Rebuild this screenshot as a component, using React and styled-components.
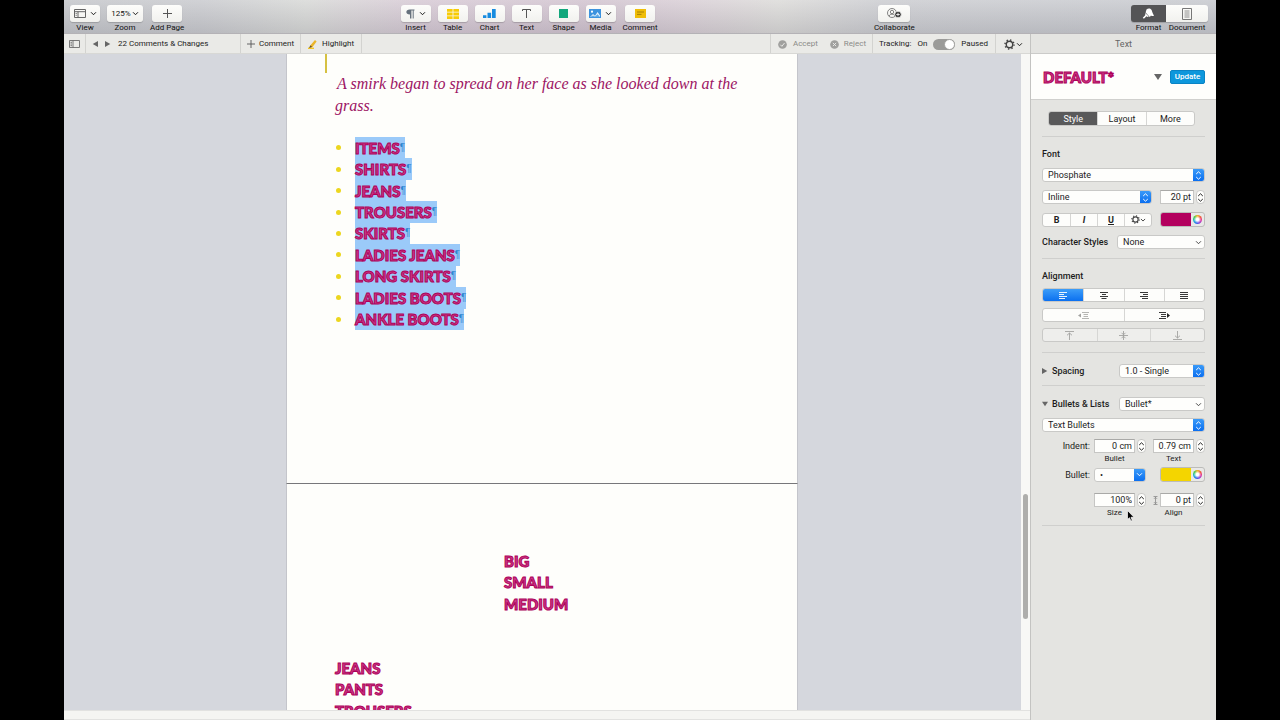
import React from "react";
import styled, { createGlobalStyle, css } from "styled-components";

const Global = createGlobalStyle`
  *, *::before, *::after { box-sizing: border-box; }
  body { margin: 0; background: #000; color: #1c1c1c; font: 8px/10px Roboto, "Liberation Sans", sans-serif; }
  button, select, input { font: inherit; color: inherit; margin: 0; padding: 0; border: 0; background: none; border-radius: 0; }
  p, ul, h1, h2 { margin: 0; padding: 0; list-style: none; }
  svg { display: block; flex: none; }
`;

const Screen = styled.div`
  height: 100vh;
  padding: 0 5%;
  overflow: hidden;
`;
const Window = styled.div`
  height: 100%;
  display: flex;
  flex-direction: column;
`;

/* Toolbar */
const Toolbar = styled.header`
  flex: none;
  height: 34px;
  padding: 5px 8px 0 6px;
  display: flex;
  justify-content: space-between;
  align-items: flex-start;
  border-bottom: 1px solid #b4b2b6;
  background:
    linear-gradient(180deg, rgba(255, 255, 255, 0.12), rgba(90, 90, 100, 0.16)),
    linear-gradient(90deg, #c6c8cc 0%, #cbccd0 12%, #d9dad8 21%, #d8cbd6 31%, #d3c5d1 46%, #dad0d7 54%, #dddcda 62%, #cdced2 71%, #c9cbd0 100%);
`;
const ToolGroup = styled.div`
  display: flex;
  gap: ${(p) => (p.$joined ? "0" : "7px")};
`;
const Tool = styled.label`
  display: flex;
  flex-direction: column;
  align-items: center;
  gap: 1px;
  white-space: nowrap;
  color: #111;
`;
const ToolButton = styled.button`
  min-width: ${(p) => p.$w || 30}px;
  height: 17px;
  display: flex;
  align-items: center;
  justify-content: center;
  gap: 4px;
  border-radius: ${(p) => p.$radius || "3px"};
  background: ${(p) => (p.$active ? "#545456" : "linear-gradient(#fdfdfb, #f1f1ee)")};
  box-shadow: 0 1px 1px rgba(0, 0, 0, 0.18);
`;
const ZoomValue = styled.span`
  margin-right: -3px;
`;

/* Body columns */
const Body = styled.div`
  flex: 1;
  min-height: 0;
  display: flex;
`;
const MainColumn = styled.div`
  flex: 1;
  min-width: 0;
  display: flex;
  flex-direction: column;
`;

/* Review bar */
const ReviewBar = styled.div`
  flex: none;
  height: 20px;
  display: flex;
  align-items: stretch;
  background: #eaeae7;
  border-bottom: 1px solid #d8d8d5;
  white-space: nowrap;
`;
const Cell = styled.div`
  display: flex;
  align-items: center;
  gap: ${(p) => p.$gap || 6}px;
  padding: 1px ${(p) => p.$pr || 6}px 0 ${(p) => p.$pl || 6}px;
  border-right: ${(p) => (p.$last ? "0" : "1px solid #d3d3d0")};
  border-left: ${(p) => (p.$lead ? "1px solid #d3d3d0" : "0")};
`;
const Spacer = styled.div`
  flex: 1;
`;
const PlainButton = styled.button`
  display: flex;
  align-items: center;
  gap: ${(p) => p.$gap || 5}px;
  color: ${(p) => (p.$muted ? "#8a8a88" : "inherit")};
`;
const Status = styled.span`
  min-width: 116px;
`;
const Switch = styled.input`
  appearance: none;
  width: 22px;
  height: 11px;
  border-radius: 6px;
  background: #9b9b99;
  display: flex;
  justify-content: flex-end;
  &::after {
    content: "";
    width: 11px;
    height: 11px;
    border-radius: 50%;
    background: #fff;
    border: 1px solid #a2a2a0;
  }
`;

/* Document canvas */
const CanvasRow = styled.div`
  flex: 1;
  min-height: 0;
  display: flex;
`;
const Canvas = styled.main`
  flex: 1;
  min-width: 0;
  padding-right: 1px;
  overflow: hidden;
  background: #d5d7dd;
  display: flex;
  flex-direction: column;
  align-items: center;
`;
const Page = styled.section`
  width: 512px;
  flex: none;
  background: #fefefb;
  border: solid #c4c5cb;
  border-width: 0 1px;
  padding: 0 48px;
`;
const FirstPage = styled(Page)`
  height: 430px;
  border-bottom: 1px solid #77777a;
`;
const SecondPage = styled(Page)`
  padding-top: 67px;
  flex: 1 0 auto;
`;
const Caret = styled.div`
  width: 2px;
  height: 19px;
  margin-left: -10px;
  background: #d6c142;
`;
const Script = styled.p`
  height: 64px;
  color: #9c1463;
  font: italic 16px/22px "Liberation Serif", serif;
  text-indent: 2px;
  white-space: nowrap;
`;
const inlineFace = css`
  color: #cc3a86;
  font-family: Lato, sans-serif;
  font-weight: 900;
  -webkit-text-stroke: 1px #ad005a;
  text-transform: uppercase;
  white-space: nowrap;
`;
const List = styled.ul`
  display: grid;
  grid-template-rows: repeat(9, 1fr);
  height: 193px;
`;
const ListRow = styled.li`
  display: flex;
  align-items: center;
  &::before {
    content: "";
    width: 5px;
    height: 5px;
    margin: 0 14px 0 1px;
    border-radius: 50%;
    background: #ecd61f;
  }
`;
const Selected = styled.span`
  ${inlineFace}
  align-self: stretch;
  display: flex;
  align-items: center;
  font-size: 15px;
  line-height: 20px;
  background: #9bcaf9;
`;
const Pilcrow = styled.span`
  color: #2f86cf;
  font: 10px/12px "Liberation Sans", sans-serif;
  -webkit-text-stroke: 0;
`;
const Block = styled.div`
  ${inlineFace}
  height: 64px;
  margin: 0 0 43px ${(p) => p.$indent || 0}px;
  display: grid;
  grid-template-rows: repeat(3, 1fr);
  align-items: center;
  font-size: 15px;
  line-height: 21px;
`;
const ScrollTrack = styled.div`
  width: 9px;
  background: #f8f8f6;
  padding: 440px 2px 0;
`;
const ScrollThumb = styled.div`
  height: 125px;
  border-radius: 3px;
  background: #aeaeac;
`;
const StatusStrip = styled.footer`
  flex: none;
  height: 10px;
  background: #f5f5f2;
  border: solid #e2e2e0;
  border-width: 1px 0;
`;

/* Inspector */
const Inspector = styled.aside`
  width: 186px;
  flex: none;
  background: #e4e4e1;
  border-left: 1px solid #c3c3c1;
  font-size: 9px;
`;
const InspectorTitle = styled.h1`
  height: 20px;
  font: 9px/20px Roboto, sans-serif;
  text-align: center;
  color: #666;
  border-bottom: 1px solid #cbcbc9;
`;
const StyleHeader = styled.div`
  height: 46px;
  padding: 0 11px 0 12px;
  display: flex;
  align-items: center;
  gap: 8px;
  background: #fefefc;
  border-bottom: 1px solid #d0d0ce;
`;
const StyleName = styled.h2`
  ${inlineFace}
  flex: 1;
  font-size: 15px;
  line-height: 18px;
`;
const Update = styled.button`
  width: 35px;
  height: 14px;
  border-radius: 2px;
  background: #0d97dc;
  border: 1px solid #0a83c4;
  color: #fff;
  font-size: 8px;
  font-weight: 500;
  line-height: 12px;
`;
const Controls = styled.div`
  padding: 11px 11px 0;
`;
const Segments = styled.div`
  height: ${(p) => p.$h || 14}px;
  display: grid;
  grid-auto-flow: column;
  grid-auto-columns: 1fr;
  border-radius: 3px;
  border: 1px solid #c9c9c7;
  background: ${(p) => (p.$disabled ? "#eeeeec" : "#fdfdfb")};
  overflow: hidden;
`;
const TabSegments = styled(Segments)`
  margin: 0 10px 10px 6px;
`;
const FormatSegments = styled(Segments)`
  flex: 1;
`;
const Segment = styled.button`
  display: flex;
  align-items: center;
  justify-content: center;
  color: ${(p) => (p.$on ? "#fff" : p.$dim ? "#a3a3a1" : "#222")};
  background: ${(p) => (p.$on === "dark" ? "#59595a" : p.$on ? "linear-gradient(#3c9df8, #0b70f0)" : "transparent")};
  & + & { border-left: 1px solid #d6d6d4; }
`;
const Section = styled.section`
  border-top: 1px solid #cfcfcd;
  padding: ${(p) => p.$p || "11px 0 9px"};
  display: flex;
  flex-direction: column;
  gap: ${(p) => p.$gap || 8}px;
`;
const SectionTitle = styled.h2`
  font: 500 9px/12px Roboto, sans-serif;
`;
const Row = styled.div`
  display: flex;
  align-items: center;
  gap: 8px;
`;
const RowLabel = styled.label`
  flex: 1;
  white-space: nowrap;
  font-weight: 500;
`;
const Disclosure = styled.button`
  flex: 1;
  display: flex;
  align-items: center;
  gap: 4px;
  white-space: nowrap;
  font-weight: 500;
`;
const SelectBox = styled.div`
  height: 14px;
  display: flex;
  align-items: stretch;
  flex: ${(p) => (p.$w ? "none" : 1)};
  width: ${(p) => (p.$w ? p.$w + "px" : "auto")};
  background: #fefefc;
  border: 1px solid #c9c9c7;
  border-radius: 3px;
  overflow: hidden;
`;
const SelectField = styled.select`
  appearance: none;
  flex: 1;
  min-width: 0;
  padding-left: 5px;
  line-height: 12px;
  outline: 0;
`;
const SelectCap = styled.span`
  width: 11px;
  display: flex;
  align-items: center;
  justify-content: center;
  color: ${(p) => (p.$plain ? "#444" : "#fff")};
  background: ${(p) => (p.$plain ? "none" : "linear-gradient(#3a9af8, #0b6ff0)")};
`;
const NumberBox = styled.div`
  display: flex;
  gap: 2px;
`;
const NumberField = styled.input`
  width: ${(p) => p.$w || 41}px;
  height: 14px;
  padding-right: 2px;
  text-align: right;
  background: #fefefc;
  border: 1px solid #c6c6c4;
  border-top-color: #a9a9a7;
`;
const Stepper = styled.button`
  width: 9px;
  height: 14px;
  display: flex;
  align-items: center;
  justify-content: center;
  background: #fefefc;
  border: 1px solid #c9c9c7;
  border-radius: 4px;
`;
const ColourWell = styled.div`
  width: 45px;
  height: 15px;
  display: flex;
  border: 1px solid #bcbcba;
  border-radius: 3px;
  overflow: hidden;
  background: #e9e9e7;
`;
const Swatch = styled.button`
  flex: 1;
  background: ${(p) => p.$c};
`;
const WheelButton = styled.button`
  width: 13px;
  display: flex;
  align-items: center;
  justify-content: center;
`;
const Wheel = styled.span`
  width: 9px;
  height: 9px;
  border-radius: 50%;
  background: radial-gradient(circle, #fff 20%, transparent 60%),
    conic-gradient(#f0b020, #f05030, #e030a0, #8040e0, #2070f0, #20b8c8, #40c840, #f0b020);
`;
const BulletGrid = styled.div`
  display: grid;
  grid-template-columns: 1fr 52px 52px;
  column-gap: 7px;
  align-items: center;
  justify-items: end;
`;
const FieldLabel = styled.label`
  white-space: nowrap;
  margin-right: -3px;
`;
const Caption = styled.label`
  justify-self: ${(p) => (p.$end ? "end" : "start")};
  width: 41px;
  height: ${(p) => p.$h || 11}px;
  text-align: center;
  font-size: 8px;
  line-height: 11px;
`;
const GridGap = styled.span`
  grid-column: 1 / -1;
  height: 11px;
`;
const AlignField = styled.div`
  display: flex;
  align-items: center;
  gap: 2px;
`;
const EndRule = styled.hr`
  margin: 0;
  border: 0;
  border-top: 1px solid #cfcfcd;
`;
const Pointer = styled.svg`
  position: absolute;
  left: calc(95% - 89px);
  top: 510px;
`;

/* Icons */
const Chevron = ({ w = 7 }) => (
  <svg width={w} height={w} viewBox="0 0 8 8" fill="none" stroke="currentColor" strokeWidth="1.1" aria-hidden="true">
    <path d="M1.2 2.6 4 5.4l2.8-2.8" />
  </svg>
);
const UpDown = () => (
  <svg width="7" height="11" viewBox="0 0 7 11" fill="none" stroke="currentColor" strokeWidth="1" aria-hidden="true">
    <path d="M1.2 4 3.5 1.8 5.8 4M1.2 7l2.3 2.2L5.8 7" />
  </svg>
);
const Triangle = ({ dir = "right", size = 6, fill = "#666" }) => {
  const d = { right: "M0 0 7 4 0 8z", left: "M8 0 1 4l7 4z", down: "M0 1h8L4 7z" }[dir];
  return (
    <svg width={size} height={size} viewBox="0 0 8 8" fill={fill} aria-hidden="true">
      <path d={d} />
    </svg>
  );
};
const Plus = ({ s = 9, c = "#555" }) => (
  <svg width={s} height={s} viewBox="0 0 9 9" stroke={c} strokeWidth="1" aria-hidden="true">
    <path d="M4.5 0v9M0 4.5h9" />
  </svg>
);
const ViewIcon = () => (
  <svg width="12" height="9" viewBox="0 0 12 9" fill="none" stroke="#666" aria-hidden="true">
    <path d="M.5.5h11v8H.5zM.5 2.7h11M4 2.7v5.8" />
    <path d="M1.5 4.5H3M1.5 6.3H3" strokeWidth=".7" />
  </svg>
);
const ParagraphIcon = () => (
  <svg width="9" height="10" viewBox="0 0 9 10" aria-hidden="true">
    <path d="M3.8 5.6C-.8 5.6-.8.5 3.8.5H8.5v1H7.7V9.5h-1V1.5H5.4v8H4V5.6z" fill="#66717c" />
  </svg>
);
const TableIcon = () => (
  <svg width="12" height="10" viewBox="0 0 12 10" fill="#f7cb06" aria-hidden="true">
    <path d="M0 0h5.6v2.8H0zM6.4 0H12v2.8H6.4zM0 3.6h5.6v2.8H0zM6.4 3.6H12v2.8H6.4zM0 7.2h5.6V10H0zM6.4 7.2H12V10H6.4z" />
  </svg>
);
const ChartIcon = () => (
  <svg width="13" height="9" viewBox="0 0 13 9" fill="#168be0" aria-hidden="true">
    <path d="M0 6.2h3.4V9H0zM4.500 3.800h3.600V9H4.500zM9 0h3.700v9H9z" />
  </svg>
);
const TextIcon = () => (
  <svg width="9" height="9" viewBox="0 0 9 9" fill="none" stroke="#555" aria-hidden="true">
    <path d="M.5 2V.5h8V2M4.5.5V9" />
  </svg>
);
const ShapeIcon = () => (
  <svg width="9" height="9" viewBox="0 0 9 9" aria-hidden="true">
    <path d="M0 0h9v9H0z" fill="#12a77c" />
  </svg>
);
const MediaIcon = () => (
  <svg width="12" height="9" viewBox="0 0 12 9" aria-hidden="true">
    <path d="M0 0h12v9H0z" fill="#3d93de" />
    <circle cx="3" cy="2.7" r="1.1" fill="#fff" />
    <path d="M1 8 4 5l2 1.8L8.6 3 11 6.5V8z" fill="#e2f1fd" />
    <path d="M1 8 4 6.4l2 1.2 2.6-2.4L11 8z" fill="#5da9e6" />
  </svg>
);
const CommentIcon = () => (
  <svg width="11" height="9" viewBox="0 0 11 9" aria-hidden="true">
    <path d="M0 0h11v9H0z" fill="#efbd08" />
    <path d="M2 3h7M2 5.4h4.5" stroke="#a07c04" strokeWidth=".9" />
  </svg>
);
const CollaborateIcon = () => (
  <svg width="15" height="11" viewBox="0 0 15 11" fill="none" stroke="#666" strokeWidth=".8" aria-hidden="true">
    <circle cx="5" cy="5" r="4.5" />
    <circle cx="5" cy="4" r="1.7" />
    <path d="M2.2 8.3c.3-2 1.8-2 2.8-2s2.5 0 2.8 2" />
    <circle cx="11" cy="6.5" r="3.3" fill="#333" stroke="#fafaf8" />
    <path d="M11 4.700v3.600M9.200 6.500h3.600" stroke="#fff" />
  </svg>
);
const BrushIcon = () => (
  <svg width="13" height="11" viewBox="0 0 13 11" fill="#fff" aria-hidden="true">
    <path d="M4.500 1.500C6 0 8.300.1 9.400 1.700c.8 1.300.9 3.300 2.600 6-1 .5-2.200.5-3-.3L7.800 9 3.600 4.500z" />
    <path d="M3.300 5 6.800 8.500 5.600 9.100 4.500 8.200 1.900 10.700.8 9.700 3.200 7.200z" />
  </svg>
);
const DocIcon = () => (
  <svg width="10" height="12" viewBox="0 0 10 12" fill="none" stroke="#777" aria-hidden="true">
    <path d="M.5.5h9v11h-9z" />
    <path d="M2.5 3h5M2.5 5h5M2.5 7h5M2.5 9h5" strokeWidth=".8" />
  </svg>
);
const SidebarIcon = () => (
  <svg width="11" height="8" viewBox="0 0 11 8" fill="none" stroke="#6b6b6b" strokeWidth=".9" aria-hidden="true">
    <path d="M.5.5h10v7H.5zM4 .5v7M1.5 2.3h1.5M1.5 4h1.500M1.5 5.7h1.5" />
  </svg>
);
const HighlightIcon = () => (
  <svg width="9" height="9" viewBox="0 0 9 9" aria-hidden="true">
    <path d="M0 7.6h6V9H0z" fill="#f3c622" />
    <path d="M7 0 8.6 1.4 4.5 7 2 7.5 2.6 5z" fill="#eab52a" />
    <path d="M2.4 5.300 4.200 7 1 8z" fill="#6b4e1a" />
  </svg>
);
const Badge = ({ cross }) => (
  <svg width="9" height="9" viewBox="0 0 10 10" fill="none" stroke="#efefed" aria-hidden="true">
    <circle cx="5" cy="5" r="4.8" fill="#a0a09e" stroke="none" />
    <path d={cross ? "M3.2 3.2l3.6 3.6M6.8 3.2 3.2 6.8" : "M2.6 5.2 4.3 7l3-3.7"} />
  </svg>
);
const Gear = ({ s = 12 }) => (
  <svg width={s} height={s} viewBox="0 0 12 12" fill="none" stroke="#444" aria-hidden="true">
    <circle cx="6" cy="6" r="3.500" strokeWidth="1.5" />
    <circle cx="6" cy="6" r="4.9" strokeWidth="1.6" strokeDasharray="1.5 2.348" />
  </svg>
);
const linePaths = {
  left: "M0 .5h8M0 2.5h5M0 4.5h8M0 6.5h6",
  center: "M0 .5h8M2 2.5h4M0 4.5h8M1.5 6.5h5",
  right: "M0 .5h8M3 2.5h5M0 4.5h8M2 6.5h6",
  justify: "M0 .5h8M0 2.5h8M0 4.5h8M0 6.5h8",
};
const Lines = ({ kind }) => (
  <svg width="8" height="7" viewBox="0 0 8 7" stroke="currentColor" strokeWidth=".9" aria-hidden="true">
    <path d={linePaths[kind]} />
  </svg>
);
const Outdent = () => (
  <svg width="11" height="7" viewBox="0 0 11 7" stroke="currentColor" strokeWidth=".8" aria-hidden="true">
    <path d="M4 .5h7M5.5 2.5H10M5.5 4.5H10M4 6.5h7" />
    <path d="M0 3.5 3 1.5v4z" fill="currentColor" stroke="none" />
  </svg>
);
const Indent = () => (
  <svg width="11" height="7" viewBox="0 0 11 7" stroke="currentColor" strokeWidth=".9" aria-hidden="true">
    <path d="M0 .5h7M2 2.5h5M2 4.5h5M0 6.5h7" />
    <path d="M11 3.5 8 1v5z" fill="currentColor" stroke="none" />
  </svg>
);
const vPaths = {
  top: "M0 .5h9M4.5 9V2M2 4.3 4.5 2 7 4.3",
  middle: "M0 4.5h9M4.5 0v9M2.5 1.8l2 2 2-2M2.5 7.2l2-2 2 2",
  bottom: "M0 8.5h9M4.5 0v7M2 4.7 4.5 7 7 4.7",
};
const VAlign = ({ kind }) => (
  <svg width="9" height="9" viewBox="0 0 9 9" fill="none" stroke="currentColor" strokeWidth=".9" aria-hidden="true">
    <path d={vPaths[kind]} />
  </svg>
);
const HeightIcon = () => (
  <svg width="5" height="9" viewBox="0 0 5 9" fill="none" stroke="#888" strokeWidth=".8" aria-hidden="true">
    <path d="M.5.5h4M.5 8.5h4M2.500 1v7M1 2.8l1.5-1.5L4 2.8M1 6.2l1.5 1.5L4 6.2" />
  </svg>
);

function ToolItem({ label, children, ...rest }) {
  return (
    <Tool>
      <ToolButton type="button" {...rest}>{children}</ToolButton>
      {label}
    </Tool>
  );
}
function Select({ id, label, value, w, plain, down }) {
  return (
    <SelectBox $w={w}>
      <SelectField id={id} aria-label={label} defaultValue={value}>
        <option>{value}</option>
      </SelectField>
      <SelectCap $plain={plain}>{plain || down ? <Chevron /> : <UpDown />}</SelectCap>
    </SelectBox>
  );
}
function NumberInput({ id, label, value, w }) {
  return (
    <NumberBox>
      <NumberField id={id} aria-label={label} type="text" defaultValue={value} $w={w} />
      <Stepper type="button" aria-label={`Step ${label}`}><UpDown /></Stepper>
    </NumberBox>
  );
}
function Colour({ c, label }) {
  return (
    <ColourWell>
      <Swatch type="button" aria-label={label} $c={c} />
      <WheelButton type="button" aria-label={`${label} wheel`}><Wheel /></WheelButton>
    </ColourWell>
  );
}

const items = ["Items", "Shirts", "Jeans", "Trousers", "Skirts", "Ladies Jeans", "Long Skirts", "Ladies Boots", "Ankle Boots"];

export default function App() {
  return (
    <Screen>
      <Global />
      <Window>
        <Toolbar>
          <ToolGroup>
            <ToolItem label="View"><ViewIcon /><Chevron /></ToolItem>
            <ToolItem label="Zoom" $w={36}><ZoomValue>125%</ZoomValue><Chevron /></ToolItem>
            <ToolItem label="Add Page"><Plus /></ToolItem>
          </ToolGroup>
          <ToolGroup>
            <ToolItem label="Insert"><ParagraphIcon /><Chevron /></ToolItem>
            <ToolItem label="Table"><TableIcon /></ToolItem>
            <ToolItem label="Chart"><ChartIcon /></ToolItem>
            <ToolItem label="Text"><TextIcon /></ToolItem>
            <ToolItem label="Shape"><ShapeIcon /></ToolItem>
            <ToolItem label="Media"><MediaIcon /><Chevron /></ToolItem>
            <ToolItem label="Comment"><CommentIcon /></ToolItem>
          </ToolGroup>
          <ToolGroup>
            <ToolItem label="Collaborate" $w={32}><CollaborateIcon /></ToolItem>
          </ToolGroup>
          <ToolGroup $joined>
            <ToolItem label="Format" $w={35} $active $radius="3px 0 0 3px"><BrushIcon /></ToolItem>
            <ToolItem label="Document" $w={42} $radius="0 3px 3px 0"><DocIcon /></ToolItem>
          </ToolGroup>
        </Toolbar>

        <Body>
          <MainColumn>
            <ReviewBar>
              <Cell $pl={5} $pr={5}>
                <PlainButton type="button" aria-label="Show comments"><SidebarIcon /></PlainButton>
              </Cell>
              <Cell $gap={7}>
                <PlainButton type="button" aria-label="Previous"><Triangle dir="left" /></PlainButton>
                <PlainButton type="button" aria-label="Next"><Triangle /></PlainButton>
                <Status>22 Comments &amp; Changes</Status>
              </Cell>
              <Cell>
                <PlainButton type="button" $gap={4}><Plus s={8} />Comment</PlainButton>
              </Cell>
              <Cell $pl={7} $pr={7}>
                <PlainButton type="button"><HighlightIcon />Highlight</PlainButton>
              </Cell>
              <Spacer />
              <Cell $gap={12} $pl={7} $lead>
                <PlainButton type="button" $muted $gap={6}><Badge />Accept</PlainButton>
                <PlainButton type="button" $muted><Badge cross />Reject</PlainButton>
              </Cell>
              <Cell $pr={7}>
                <label htmlFor="tracking">Tracking:</label>
                <span>On</span>
                <Switch id="tracking" type="checkbox" defaultChecked />
                <span>Paused</span>
              </Cell>
              <Cell $last $pl={8} $pr={7}>
                <PlainButton type="button" aria-label="Tracking options" $gap={1}><Gear s={11} /><Chevron /></PlainButton>
              </Cell>
            </ReviewBar>
            <CanvasRow>
              <Canvas>
                <FirstPage>
                  <Caret />
                  <Script>
                    A smirk began to spread on her face as she looked down at the<br />grass.
                  </Script>
                  <List>
                    {items.map((t) => (
                      <ListRow key={t}><Selected>{t}<Pilcrow>¶</Pilcrow></Selected></ListRow>
                    ))}
                  </List>
                </FirstPage>
                <SecondPage>
                  <Block $indent={169}><p>Big</p><p>Small</p><p>Medium</p></Block>
                  <Block><p>Jeans</p><p>Pants</p><p>Trousers</p></Block>
                </SecondPage>
              </Canvas>
              <ScrollTrack><ScrollThumb /></ScrollTrack>
            </CanvasRow>
            <StatusStrip />
          </MainColumn>

          <Inspector>
            <InspectorTitle>Text</InspectorTitle>
            <StyleHeader>
              <StyleName>Default*</StyleName>
              <PlainButton type="button" aria-label="Paragraph styles"><Triangle dir="down" size={8} /></PlainButton>
              <Update type="button">Update</Update>
            </StyleHeader>
            <Controls>
              <TabSegments $h={15}>
                <Segment type="button" $on="dark">Style</Segment>
                <Segment type="button">Layout</Segment>
                <Segment type="button">More</Segment>
              </TabSegments>

              <Section>
                <SectionTitle>Font</SectionTitle>
                <Row><Select label="Font family" value="Phosphate" /></Row>
                <Row>
                  <Select label="Typeface" value="Inline" />
                  <NumberInput label="Font size" value="20 pt" w={34} />
                </Row>
                <Row>
                  <FormatSegments>
                    <Segment type="button"><b>B</b></Segment>
                    <Segment type="button"><b><i>I</i></b></Segment>
                    <Segment type="button"><b><u>U</u></b></Segment>
                    <Segment type="button" aria-label="Advanced options"><Gear s={9} /><Chevron w={6} /></Segment>
                  </FormatSegments>
                  <Colour c="#b3005e" label="Text colour" />
                </Row>
                <Row>
                  <RowLabel htmlFor="char-style">Character Styles</RowLabel>
                  <Select id="char-style" value="None" w={88} plain />
                </Row>
              </Section>

              <Section $gap={6} $p="11px 0 10px">
                <SectionTitle>Alignment</SectionTitle>
                <Segments>
                  {["left", "center", "right", "justify"].map((k, i) => (
                    <Segment key={k} type="button" aria-label={`Align ${k}`} $on={i === 0}><Lines kind={k} /></Segment>
                  ))}
                </Segments>
                <Segments>
                  <Segment type="button" aria-label="Decrease indent" $dim><Outdent /></Segment>
                  <Segment type="button" aria-label="Increase indent"><Indent /></Segment>
                </Segments>
                <Segments $disabled>
                  {["top", "middle", "bottom"].map((k) => (
                    <Segment key={k} type="button" aria-label={`Align ${k}`} $dim><VAlign kind={k} /></Segment>
                  ))}
                </Segments>
              </Section>

              <Section $p="11px 0 7px">
                <Row>
                  <Disclosure type="button"><Triangle />Spacing</Disclosure>
                  <Select label="Line spacing" value="1.0 - Single" w={86} />
                </Row>
              </Section>

              <Section $p="11px 0 7px" $gap={7}>
                <Row>
                  <Disclosure type="button"><Triangle dir="down" />Bullets &amp; Lists</Disclosure>
                  <Select label="List style" value="Bullet*" w={86} plain />
                </Row>
                <Row><Select label="Bullet type" value="Text Bullets" /></Row>
                <BulletGrid>
                  <FieldLabel htmlFor="indent-bullet">Indent:</FieldLabel>
                  <NumberInput id="indent-bullet" label="Bullet indent" value="0 cm" />
                  <NumberInput id="indent-text" label="Text indent" value="0.79 cm" />
                  <span />
                  <Caption htmlFor="indent-bullet" $h={14}>Bullet</Caption>
                  <Caption htmlFor="indent-text" $h={14}>Text</Caption>
                  <FieldLabel htmlFor="bullet-char">Bullet:</FieldLabel>
                  <Select id="bullet-char" value="•" w={52} down />
                  <Colour c="#f4d500" label="Bullet colour" />
                  <GridGap />
                  <span />
                  <NumberInput id="bullet-size" label="Bullet size" value="100%" />
                  <AlignField>
                    <HeightIcon />
                    <NumberInput id="bullet-align" label="Bullet align" value="0 pt" w={34} />
                  </AlignField>
                  <span />
                  <Caption htmlFor="bullet-size">Size</Caption>
                  <Caption htmlFor="bullet-align">Align</Caption>
                </BulletGrid>
              </Section>
              <EndRule />
            </Controls>
          </Inspector>
        </Body>
      </Window>
      <Pointer width="8" height="12" viewBox="0 0 8 12" aria-hidden="true">
        <path d="M.5.5v9l2-1.8 1.4 3.4 1.4-.6L4 7.3h3z" fill="#000" stroke="#fff" strokeWidth=".7" />
      </Pointer>
    </Screen>
  );
}
